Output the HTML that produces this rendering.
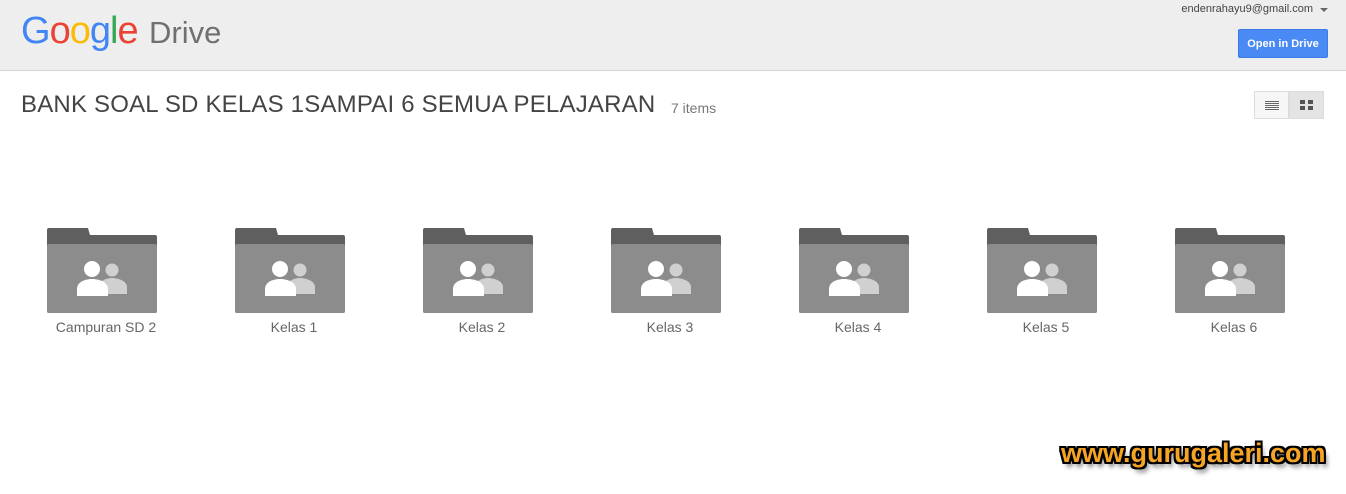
<!DOCTYPE html>
<html><head><style>
body{margin:0;width:1346px;height:494px;background:#fff;font-family:"Liberation Sans",Arial,sans-serif;position:relative;overflow:hidden}
.hdr{position:absolute;left:0;top:0;width:1346px;height:70px;background:#eeeeee;border-bottom:1px solid #d6d6d6}
.logo{position:absolute;left:21px;top:10px;font-size:38px;letter-spacing:-1px}
.drive{position:absolute;left:149px;top:15px;font-size:31px;color:#707070}
.email{position:absolute;right:33px;top:3px;font-size:11px;color:#444}
.caret{position:absolute;right:18px;top:8px;width:0;height:0;border-left:4px solid transparent;border-right:4px solid transparent;border-top:4px solid #666}
.btn{position:absolute;left:1238px;top:29px;width:90px;height:29px;background:#4a8af4;border:1px solid #3b7be8;border-radius:2px;color:#fff;font-weight:bold;font-size:11px;line-height:29px;text-align:center;box-sizing:border-box}
.title{position:absolute;left:21px;top:91px;font-size:24px;color:#444;letter-spacing:0.2px}
.items{position:absolute;left:671px;top:100px;font-size:14px;color:#777}
.vb{position:absolute;top:91px;width:35px;height:28px;border:1px solid #dcdcdc;box-sizing:border-box;background:#f6f6f6}
.f{position:absolute;top:228px;width:110px}
.f span{display:block;text-align:center;font-size:14px;color:#666;margin-top:1px;margin-left:-26px;width:170px}
.wm{position:absolute;left:1061px;top:438px;font-size:27px;font-weight:bold;color:#f6a423;text-shadow:-2px -2px 0 #000,2px -2px 0 #000,-2px 2px 0 #000,2px 2px 0 #000,0 2px 0 #000,0 -2px 0 #000,2px 0 0 #000,-2px 0 0 #000,3px 5px 5px #777}
</style></head><body>
<div class="hdr">
<div class="logo"><span style="color:#4285f4">G</span><span style="color:#ea4335">o</span><span style="color:#fbbc05">o</span><span style="color:#4285f4">g</span><span style="color:#34a853">l</span><span style="color:#ea4335">e</span></div>
<div class="drive">Drive</div>
<div class="email">endenrahayu9@gmail.com</div><div class="caret"></div>
<div class="btn">Open in Drive</div>
</div>
<div class="title">BANK SOAL SD KELAS 1SAMPAI 6 SEMUA PELAJARAN</div>
<div class="items">7 items</div>
<div class="vb" style="left:1254px"><svg width="33" height="26"><g fill="#666"><rect x="10" y="9" width="14" height="1"/><rect x="10" y="11" width="14" height="1"/><rect x="10" y="13" width="14" height="1"/><rect x="10" y="15" width="14" height="1"/><rect x="10" y="17" width="14" height="1"/></g></svg></div>
<div class="vb" style="left:1289px;background:#e4e4e4"><svg width="33" height="26"><g fill="#555"><rect x="10" y="8" width="5" height="4"/><rect x="18" y="8" width="5" height="4"/><rect x="10" y="14" width="5" height="4"/><rect x="18" y="14" width="5" height="4"/></g></svg></div>

<svg width="0" height="0" style="position:absolute"><defs><g id="fd">
<path d="M2 0H41L43 7H108a2 2 0 0 1 2 2V83a2 2 0 0 1-2 2H2a2 2 0 0 1-2-2V2a2 2 0 0 1 2-2z" fill="#5f5f5f"/>
<path d="M2 16H108a2 2 0 0 1 2 2V83a2 2 0 0 1-2 2H2a2 2 0 0 1-2-2V18a2 2 0 0 1 2-2z" fill="#8c8c8c"/>
<circle cx="65" cy="42" r="6.5" fill="#d0d0d0"/>
<path d="M52 66V59c0-6 7-9 13-9s15 3 15 9v7z" fill="#d0d0d0"/>
<circle cx="45" cy="41" r="8" fill="#fff"/>
<path d="M30 68V61c0-7 8-10 15-10s16 3 16 10v7z" fill="#fff"/>
</g></defs></svg>

<div class="f" style="left:47px"><svg width="110" height="85"><use href="#fd"/></svg><span>Campuran SD 2</span></div>
<div class="f" style="left:235px"><svg width="110" height="85"><use href="#fd"/></svg><span>Kelas 1</span></div>
<div class="f" style="left:423px"><svg width="110" height="85"><use href="#fd"/></svg><span>Kelas 2</span></div>
<div class="f" style="left:611px"><svg width="110" height="85"><use href="#fd"/></svg><span>Kelas 3</span></div>
<div class="f" style="left:799px"><svg width="110" height="85"><use href="#fd"/></svg><span>Kelas 4</span></div>
<div class="f" style="left:987px"><svg width="110" height="85"><use href="#fd"/></svg><span>Kelas 5</span></div>
<div class="f" style="left:1175px"><svg width="110" height="85"><use href="#fd"/></svg><span>Kelas 6</span></div>

<div class="wm">www.gurugaleri.com</div>
</body></html>
